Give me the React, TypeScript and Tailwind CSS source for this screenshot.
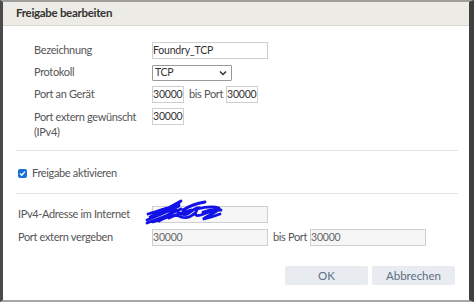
import React from "react";

const font = { fontFamily: "Lato, 'Noto Sans', sans-serif" };

function Inp({ value, w, gray }: { value: string; w: string; gray?: boolean }) {
  return (
    <div
      className={`h-[17px] ${w} border border-[#cfcfcf] ${gray ? "bg-[#f6f6f6] text-[#666]" : "bg-white text-[#333]"} text-[10.5px] tracking-[-0.2px] leading-[15px] flex items-center shrink-0 overflow-hidden whitespace-nowrap`}
    >
      {value}
    </div>
  );
}

export default function App() {
  return (
    <div
      className="w-[474px] h-[302px] bg-[#9d9d99] border-l-[3px] border-l-[#4a4a4a] border-r-[5px] border-r-[#3f3f3f] border-t-2 border-t-[#9d9d99] border-b-2 border-b-[#a6a6a6] text-[#555] text-[11px]"
      style={font}
    >
      <div className="w-full h-full bg-white flex flex-col">
        <div className="h-[24px] bg-[#ecebe5] border-b border-b-[#d9d8d3] flex items-center pl-[13px] pb-[1px]">
          <span className="font-bold text-[11.5px] text-[#333] tracking-[-0.3px]">Freigabe bearbeiten</span>
        </div>
        <div className="pl-[31px] pt-[16px] flex flex-col gap-[5px] tracking-[-0.35px]">
          <div className="flex items-center h-[17px]">
            <div className="w-[118px] shrink-0">Bezeichnung</div>
            <Inp value="Foundry_TCP" w="w-[116px]" />
          </div>
          <div className="flex items-center h-[17px]">
            <div className="w-[118px] shrink-0">Protokoll</div>
            <div className="h-[16px] w-[80px] border border-[#9a9a9a] rounded-[1px] bg-white text-[#333] text-[10.5px] flex items-center justify-between px-[2px]">
              <span>TCP</span>
              <svg width="8" height="6" viewBox="0 0 8 6" className="mr-[2px]">
                <path d="M1 1.5 L4 4.5 L7 1.5" stroke="#333" strokeWidth="1.5" fill="none" />
              </svg>
            </div>
          </div>
          <div className="flex items-center h-[17px]">
            <div className="w-[118px] shrink-0">Port an Gerät</div>
            <Inp value="30000" w="w-[32px]" />
            <span className="ml-[5px] w-[37px] shrink-0">bis Port</span>
            <Inp value="30000" w="w-[32px]" />
          </div>
          <div className="flex items-start">
            <div className="w-[118px] shrink-0 leading-[15px] pt-[1px]">
              Port extern gewünscht
              <br />
              (IPv4)
            </div>
            <Inp value="30000" w="w-[32px]" />
          </div>
        </div>
        <div className="mt-[11px] ml-[13px] mr-[11px] h-px bg-[#e2e2e2]" />
        <div className="flex items-center ml-[15px] mt-[16px] h-[12px] tracking-[-0.35px]">
          <div className="w-[9px] h-[9px] rounded-[2px] bg-[#1a6fd8] flex items-center justify-center">
            <svg width="7" height="7" viewBox="0 0 7 7">
              <path d="M1 3.6 L2.8 5.3 L6 1.6" stroke="white" strokeWidth="1.4" fill="none" />
            </svg>
          </div>
          <span className="ml-[5px]">Freigabe aktivieren</span>
        </div>
        <div className="mt-[14px] ml-[13px] mr-[11px] h-px bg-[#e2e2e2]" />
        <div className="pl-[15px] pt-[12px] flex flex-col gap-[6px] tracking-[-0.35px]">
          <div className="flex items-center h-[17px]">
            <div className="w-[134px] shrink-0">IPv4-Adresse im Internet</div>
            <div className="relative">
              <Inp value="" w="w-[116px]" gray />
              <svg
                className="absolute left-[-7px] top-[-8px]"
                width="80"
                height="28"
                viewBox="0 0 80 28"
              >
                <path
                  d="M2 25 C14 21 24 17 36 11 M2 22 C12 18 22 14 34 8 M5 19 C14 15 24 10 36 3 M3 16 C10 14 16 12 22 10 M8 24 C20 21 26 15 30 11 C34 16 38 19 44 15 C48 12 50 10 53 10 C50 15 48 19 56 17 C60 15 66 13 72 13 C68 16 62 18 58 21 C64 20 70 18 75 16 M14 23 C22 19 30 15 36 19 C42 21 46 19 50 15 M20 13 C26 10 30 8 34 6 M38 12 C46 7 54 5 60 4 M52 11 C60 9 68 8 74 10 M24 20 C32 16 40 14 46 12 M58 14 C64 12 70 11 76 12"
                  stroke="#1212e6"
                  strokeWidth="2.8"
                  fill="none"
                  strokeLinecap="round"
                />
              </svg>
            </div>
          </div>
          <div className="flex items-center h-[17px]">
            <div className="w-[134px] shrink-0">Port extern vergeben</div>
            <Inp value="30000" w="w-[116px]" gray />
            <span className="ml-[5px] w-[37px] shrink-0">bis Port</span>
            <Inp value="30000" w="w-[116px]" gray />
          </div>
        </div>
        <div className="flex justify-end gap-[4px] mr-[14px] mt-[20px]">
          <button className="w-[83px] h-[19px] bg-[#e8ebef] rounded-[2px] text-[#5d6f86] text-[11.5px]">OK</button>
          <button className="w-[83px] h-[19px] bg-[#e8ebef] rounded-[2px] text-[#5d6f86] text-[11.5px]">Abbrechen</button>
        </div>
      </div>
    </div>
  );
}
